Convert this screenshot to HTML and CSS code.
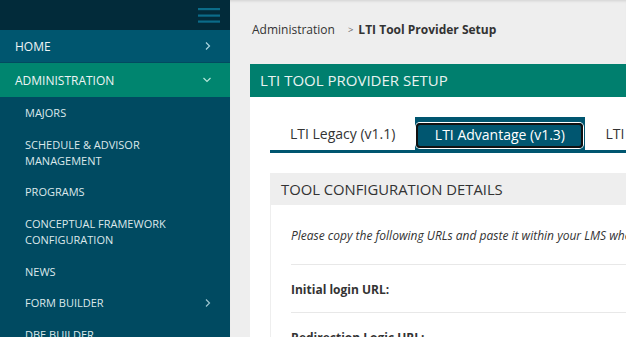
FILE: index.html
```html
<!DOCTYPE html>
<html>
<head>
<meta charset="utf-8">
<link rel="stylesheet" href="styles.css">
</head>
<body>
<div class="app">
  <aside class="sidebar">
    <div class="brandbar">
      <svg class="burger" width="22" height="16" viewBox="0 0 22 16"><rect x="0" y="1" width="22" height="2.2" fill="#0b6c89"/><rect x="0" y="7.5" width="22" height="2.2" fill="#0b6c89"/><rect x="0" y="13.5" width="22" height="2.2" fill="#0b6c89"/></svg>
    </div>
    <nav class="nav">
      <div class="nav-item home"><span>HOME</span>
        <svg class="chev" width="8" height="10" viewBox="0 0 8 10"><path d="M2 1.5 L5.5 5 L2 8.5" fill="none" stroke="#a9d6e0" stroke-width="1.2"/></svg>
      </div>
      <div class="nav-item admin"><span>ADMINISTRATION</span>
        <svg class="chev" width="10" height="8" viewBox="0 0 10 8"><path d="M1.5 2 L5 5.5 L8.5 2" fill="none" stroke="#b5e6da" stroke-width="1.2"/></svg>
      </div>
      <ul class="sub">
        <li>MAJORS</li>
        <li>SCHEDULE &amp; ADVISOR<br>MANAGEMENT</li>
        <li>PROGRAMS</li>
        <li>CONCEPTUAL FRAMEWORK<br>CONFIGURATION</li>
        <li>NEWS</li>
        <li class="has-chev"><span>FORM BUILDER</span>
          <svg class="chev" width="8" height="10" viewBox="0 0 8 10"><path d="M2 1.5 L5.5 5 L2 8.5" fill="none" stroke="#9cc4cf" stroke-width="1.2"/></svg>
        </li>
        <li>DBE BUILDER</li>
      </ul>
    </nav>
  </aside>
  <main class="main">
    <div class="crumbs">
      <span class="crumb">Administration</span>
      <span class="sep">&gt;</span>
      <span class="crumb current">LTI Tool Provider Setup</span>
    </div>
    <section class="panel">
      <header class="panel-head">LTI TOOL PROVIDER SETUP</header>
      <div class="panel-body">
        <ul class="tabs">
          <li class="tab">LTI Legacy (v1.1)</li>
          <li class="tab active"><span class="tab-btn">LTI Advantage (v1.3)</span></li>
          <li class="tab">LTI Settings</li>
        </ul>
        <div class="card">
          <div class="card-head">TOOL CONFIGURATION DETAILS</div>
          <div class="card-body">
            <p class="note">Please copy the following URLs and paste it within your LMS where applicable.</p>
            <div class="row">Initial login URL:</div>
            <div class="row">Redirection Logic URL:</div>
          </div>
        </div>
      </div>
    </section>
  </main>
</div>
</body>
</html>
```

FILE: styles.css
```css
* { box-sizing: border-box; }
html, body { margin: 0; padding: 0; }
body {
  font-family: "Open Sans", "Liberation Sans", sans-serif;
  background: #eeeeee;
  overflow: hidden;
  width: 626px;
  height: 337px;
}
.app { display: flex; height: 337px; }
.sidebar {
  width: 230px;
  flex: 0 0 230px;
  background: #004a61;
  color: #e6eef0;
}
.brandbar {
  height: 30px;
  background: #022b3a;
  display: flex;
  justify-content: flex-end;
  align-items: center;
  padding-right: 10px;
}
.burger { display: block; margin-top: -1px; }
.nav-item {
  height: 33px;
  display: flex;
  align-items: center;
  justify-content: space-between;
  padding: 0 18px 0 15px;
  font-size: 12px;
  color: #eef4f5;
}
.nav-item.home { background: #00566f; border-bottom: 1px solid #024a60; height: 33px; }
.nav-item.admin { background: #00856f; height: 34px; }
.chev { display: block; }
.sub {
  list-style: none;
  margin: 0;
  padding: 0;
}
.sub li {
  font-size: 11px;
  line-height: 16px;
  padding: 7.85px 18px 7.85px 25px;
  color: #dce8eb;
}
.sub li.has-chev { display: flex; justify-content: space-between; align-items: center; }
.main {
  flex: 1;
  min-width: 0;
  overflow: hidden;
  background: #eeeeee;
  box-shadow: inset 0 3px 3px -2px rgba(0,0,0,0.12);
}
.crumbs {
  height: 64px;
  padding: 21px 0 0 22px;
  font-size: 12px;
  color: #333;
  display: flex;
  align-items: flex-start;
  white-space: nowrap;
}
.sep { font-size: 9.5px; margin: 2px 5px 0 13px; color: #666; }
.crumb.current { font-weight: 700; color: #333; }
.panel {
  margin-left: 20px;
  width: 520px;
  background: #fff;
}
.panel-head {
  height: 33px;
  background: #007f6e;
  color: #e9f3f1;
  font-size: 15px;
  padding: 6px 0 0 10px;
  white-space: nowrap;
}
.panel-body { padding: 20px; height: 260px; }
.tabs {
  list-style: none;
  margin: 0;
  padding: 0;
  display: flex;
  border-bottom: 3px solid #005670;
  white-space: nowrap;
}
.tab {
  height: 33px;
  font-size: 14px;
  color: #333;
  padding: 7px 20px 0 20px;
}
.tab.active {
  background: #005670;
  width: 170px;
  padding: 6px 2px 2px 1px;
}
.tab-btn {
  display: block;
  height: 25px;
  border: 2px solid #111;
  border-radius: 4px;
  box-shadow: 0 0 0 1px #fff;
  color: #fff;
  line-height: 20px;
  text-align: center;
}
.card {
  margin-top: 20px;
  border: 1px solid #eeeeee;
  border-top: 0;
}
.card-head {
  height: 32px;
  background: #eeeeee;
  color: #333;
  font-size: 14.8px;
  padding: 6px 0 0 11px;
  white-space: nowrap;
  margin: 0 -1px;
}
.card-body { padding: 0 0 0 20px; }
.note {
  margin: 0;
  font-style: italic;
  font-size: 12px;
  color: #333;
  padding: 22px 0 20px;
  white-space: nowrap;
  border-bottom: 1px solid #e8e8e8;
}
.row {
  font-weight: 700;
  font-size: 12px;
  color: #333;
  padding: 16px 0 14px;
  border-bottom: 1px solid #e8e8e8;
  white-space: nowrap;
}
```
